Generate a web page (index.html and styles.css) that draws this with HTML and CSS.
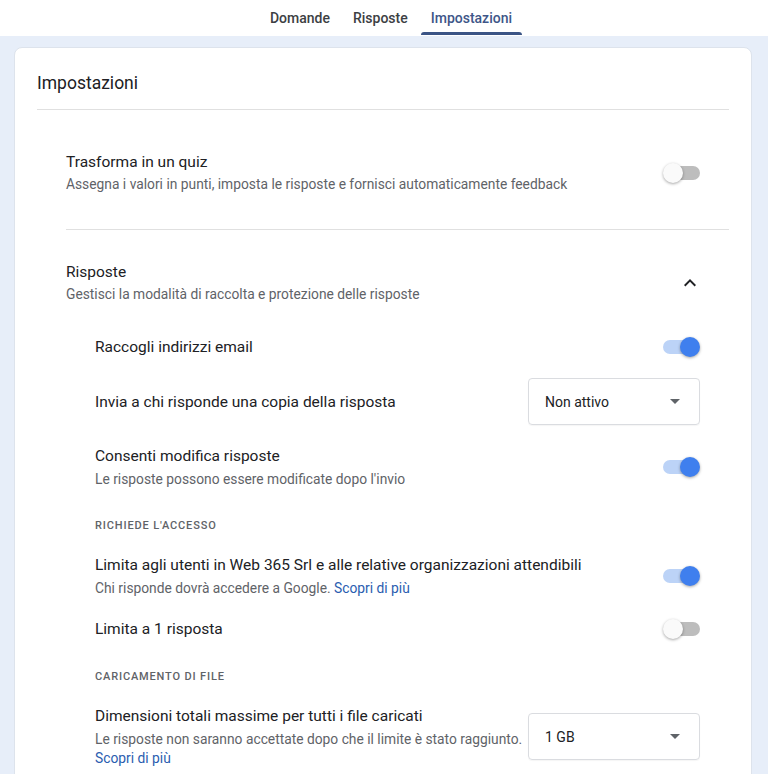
FILE: index.html
```html
<!DOCTYPE html>
<html lang="it">
<head>
<meta charset="utf-8">
<title>Impostazioni</title>
<link rel="stylesheet" href="styles.css">
</head>
<body>
<header class="topbar">
  <nav class="tabs">
    <a class="tab">Domande</a>
    <a class="tab">Risposte</a>
    <a class="tab active">Impostazioni</a>
  </nav>
</header>
<main class="main">
  <section class="card">
    <h1 class="card-title">Impostazioni</h1>

    <div class="section">
      <div class="row">
        <div class="text">
          <div class="title">Trasforma in un quiz</div>
          <div class="sub">Assegna i valori in punti, imposta le risposte e fornisci automaticamente feedback</div>
        </div>
        <span class="toggle"><span class="thumb"></span></span>
      </div>
    </div>

    <div class="section section-last">
      <div class="row">
        <div class="text">
          <div class="title">Risposte</div>
          <div class="sub">Gestisci la modalità di raccolta e protezione delle risposte</div>
        </div>
        <span class="chevron">
          <svg width="24" height="24" viewBox="0 0 24 24"><path d="M7.4 15.4 12 10.8l4.6 4.6L18 14l-6-6-6 6z" fill="#202124"/></svg>
        </span>
      </div>

      <div class="sublist">
        <div class="row">
          <div class="text"><div class="title">Raccogli indirizzi email</div></div>
          <span class="toggle on"><span class="thumb"></span></span>
        </div>

        <div class="row">
          <div class="text"><div class="title">Invia a chi risponde una copia della risposta</div></div>
          <div class="select"><span>Non attivo</span><span class="caret"></span></div>
        </div>

        <div class="row">
          <div class="text">
            <div class="title">Consenti modifica risposte</div>
            <div class="sub">Le risposte possono essere modificate dopo l'invio</div>
          </div>
          <span class="toggle on"><span class="thumb"></span></span>
        </div>

        <div class="label">Richiede l'accesso</div>

        <div class="row">
          <div class="text">
            <div class="title">Limita agli utenti in Web 365 Srl e alle relative organizzazioni attendibili</div>
            <div class="sub">Chi risponde dovrà accedere a Google. <a class="link">Scopri di più</a></div>
          </div>
          <span class="toggle on"><span class="thumb"></span></span>
        </div>

        <div class="row">
          <div class="text"><div class="title">Limita a 1 risposta</div></div>
          <span class="toggle"><span class="thumb"></span></span>
        </div>

        <div class="label">Caricamento di file</div>

        <div class="row">
          <div class="text">
            <div class="title">Dimensioni totali massime per tutti i file caricati</div>
            <div class="sub">Le risposte non saranno accettate dopo che il limite è stato raggiunto.<a class="link block">Scopri di più</a></div>
          </div>
          <div class="select"><span>1 GB</span><span class="caret"></span></div>
        </div>
      </div>
    </div>
  </section>
</main>
</body>
</html>
```

FILE: styles.css
```css
* { box-sizing: border-box; }
html, body { margin: 0; padding: 0; }
body {
  font-family: Roboto, "Noto Sans", "Liberation Sans", sans-serif;
  background: #e7eef9;
  color: #202124;
  height: 774px;
  overflow: hidden;
}
.topbar {
  background: #ffffff;
  height: 36px;
  display: flex;
  justify-content: center;
  padding-left: 14px;
}
.tabs { display: flex; gap: 3px; height: 36px; }
.tab {
  display: flex;
  align-items: center;
  padding: 0 10px 1px;
  font-size: 14px;
  font-weight: 500;
  color: #3c4043;
  position: relative;
  height: 36px;
}
.tab.active { color: #3e5688; }
.tab.active::after {
  content: "";
  position: absolute;
  left: 0; right: 0; bottom: 1px;
  height: 3px;
  background: #3b5485;
  border-radius: 3px 3px 0 0;
}
.main { padding: 11px 16px 0 14px; }
.card {
  background: #fff;
  border: 1px solid #dde3ec;
  border-radius: 8px;
  padding: 23px 22px 40px 22px;
  min-height: 760px;
}
.card-title {
  margin: 0;
  font-size: 17.5px;
  font-weight: 400;
  line-height: 24px;
  padding-bottom: 14px;
  border-bottom: 1px solid #e0e0e0;
  color: #202124;
}
.section {
  margin-left: 29px;
  padding: 41px 29px 35px 0;
  border-bottom: 1px solid #e0e0e0;
}
.section-last { border-bottom: none; padding-top: 31px; }
.row {
  display: flex;
  align-items: center;
  justify-content: space-between;
  gap: 4px;
}
.text { flex: 1; min-width: 0; }
.title { font-size: 15.5px; line-height: 22px; color: #202124; }
.sub { font-size: 13.8px; line-height: 19px; color: #5f6368; margin-top: 2px; }
.link { color: #2a5db0; }
.link.block { display: block; }
.sublist {
  margin-left: 29px;
  margin-top: 32px;
  display: flex;
  flex-direction: column;
  gap: 20px;
}
.sublist .sub { margin-top: 3px; }
.label {
  font-size: 11px;
  line-height: 16px;
  font-weight: 500;
  letter-spacing: 0.85px;
  text-transform: uppercase;
  color: #5f6368;
  margin-top: 9px;
}
.toggle {
  position: relative;
  width: 37px;
  height: 20px;
  flex: none;
}
.toggle::before {
  content: "";
  position: absolute;
  left: 3px; right: 0; top: 3px;
  height: 14px;
  border-radius: 7px;
  background: #bdbdbd;
}
.toggle .thumb {
  position: absolute;
  left: 0; top: 0;
  width: 20px; height: 20px;
  border-radius: 50%;
  background: #fafafa;
  box-shadow: 0 1px 3px rgba(0,0,0,0.35);
}
.toggle.on::before { left: 0; right: 3px; background: #bcd3f7; }
.toggle.on .thumb {
  left: auto; right: 0;
  background: #3f7fee;
}
.chevron { width: 24px; height: 24px; margin-right: -2px; flex: none; }
.select {
  width: 172px;
  height: 47px;
  flex: none;
  border: 1px solid #dadce0;
  border-radius: 4px;
  display: flex;
  align-items: center;
  justify-content: space-between;
  padding: 0 19px 0 16px;
  font-size: 14px;
  color: #202124;
  box-shadow: 0 1px 1px rgba(0,0,0,0.04);
}
.caret {
  width: 0; height: 0;
  border-left: 5px solid transparent;
  border-right: 5px solid transparent;
  border-top: 5px solid #5f6368;
}
```
